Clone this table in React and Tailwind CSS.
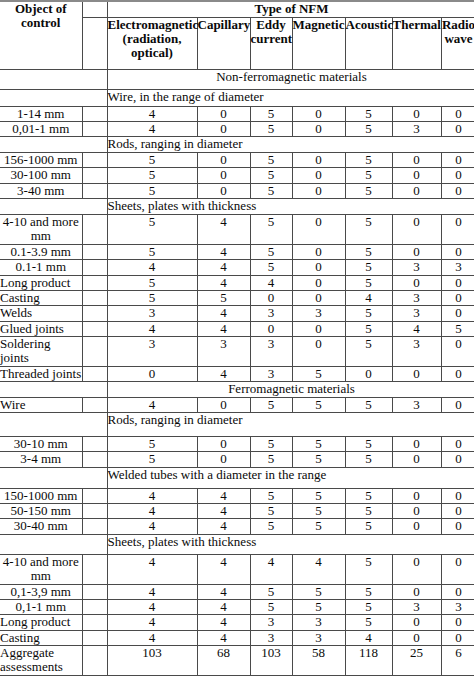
import React from "react";

const cell = "border border-[#4a4a4a] p-0 align-top leading-[14.33px]";

function DataRow({ label, left, vals, tall }) {
  return (
    <tr className={tall ? "h-[30px]" : "h-[15.33px]"}>
      <td className={`${cell} border-l-0 ${left ? "text-left" : "text-center"}`}>{label}</td>
      <td className={cell}></td>
      {vals.map((v, i) => (
        <td key={i} className={`${cell} text-center`}>
          {v}
        </td>
      ))}
    </tr>
  );
}

function SectionRow({ text, center, h }) {
  return (
    <tr className={h}>
      <td colSpan={2} className={`${cell} border-l-0`}></td>
      <td colSpan={7} className={`${cell} ${center ? "text-center" : "text-left"}`}>
        {text}
      </td>
    </tr>
  );
}

export default function App() {
  const widths = [82, 25, 90, 53, 42, 53, 47, 49, 35];
  return (
    <div className="w-[474px] h-[676px] overflow-hidden bg-white border-t-2 border-[#8a8a8a] font-['Liberation_Serif','Times_New_Roman',serif] text-[13px] text-[#0a0a0a]">
      <table className="table-fixed border-collapse w-[476px]">
        <colgroup>
          {widths.map((w, i) => (
            <col key={i} style={{ width: w }} />
          ))}
        </colgroup>
        <tbody>
          <tr className="h-[15px]">
            <td rowSpan={2} className={`${cell} border-l-0 border-t-0 font-bold text-center`}>
              Object of
              <br />
              control
            </td>
            <td className={`${cell} border-t-0`}></td>
            <td colSpan={7} className={`${cell} border-t-0 font-bold text-center`}>
              Type of NFM
            </td>
          </tr>
          <tr className="h-[52px]">
            <td className={cell}></td>
            <td className={`${cell} font-bold text-center whitespace-nowrap`}>
              Electromagnetic
              <br />
              (radiation,
              <br />
              optical)
            </td>
            <td className={`${cell} font-bold text-center`}>Capillary</td>
            <td className={`${cell} font-bold text-center`}>
              Eddy
              <br />
              current
            </td>
            <td className={`${cell} font-bold text-center`}>Magnetic</td>
            <td className={`${cell} font-bold text-center`}>Acoustic</td>
            <td className={`${cell} font-bold text-center`}>Thermal</td>
            <td className={`${cell} font-bold text-center`}>
              Radio
              <br />
              wave
            </td>
          </tr>
          <SectionRow text="Non-ferromagnetic materials" center h="h-[20px]" />
          <SectionRow text="Wire, in the range of diameter" h="h-[17px]" />
          <DataRow label="1-14 mm" vals={[4, 0, 5, 0, 5, 0, 0]} />
          <DataRow label="0,01-1 mm" vals={[4, 0, 5, 0, 5, 3, 0]} />
          <SectionRow text="Rods, ranging in diameter" h="h-[16px]" />
          <DataRow label="156-1000 mm" vals={[5, 0, 5, 0, 5, 0, 0]} />
          <DataRow label="30-100 mm" vals={[5, 0, 5, 0, 5, 0, 0]} />
          <DataRow label="3-40 mm" vals={[5, 0, 5, 0, 5, 0, 0]} />
          <SectionRow text="Sheets, plates with thickness" h="h-[16px]" />
          <DataRow label={<>4-10 and more<br />mm</>} tall vals={[5, 4, 5, 0, 5, 0, 0]} />
          <DataRow label="0.1-3.9 mm" vals={[5, 4, 5, 0, 5, 0, 0]} />
          <DataRow label="0.1-1 mm" vals={[4, 4, 5, 0, 5, 3, 3]} />
          <DataRow label="Long product" left vals={[5, 4, 4, 0, 5, 0, 0]} />
          <DataRow label="Casting" left vals={[5, 5, 0, 0, 4, 3, 0]} />
          <DataRow label="Welds" left vals={[3, 4, 3, 3, 5, 3, 0]} />
          <DataRow label="Glued joints" left vals={[4, 4, 0, 0, 5, 4, 5]} />
          <DataRow label={<>Soldering<br />joints</>} left tall vals={[3, 3, 3, 0, 5, 3, 0]} />
          <DataRow label={<span className="whitespace-nowrap">Threaded joints</span>} left vals={[0, 4, 3, 5, 0, 0, 0]} />
          <SectionRow text="Ferromagnetic materials" center h="h-[14.5px]" />
          <DataRow label="Wire" left vals={[4, 0, 5, 5, 5, 3, 0]} />
          <SectionRow text="Rods, ranging in diameter" h="h-[24px]" />
          <DataRow label="30-10 mm" vals={[5, 0, 5, 5, 5, 0, 0]} />
          <DataRow label="3-4 mm" vals={[5, 0, 5, 5, 5, 0, 0]} />
          <SectionRow text="Welded tubes with a diameter in the range" h="h-[21px]" />
          <DataRow label="150-1000 mm" vals={[4, 4, 5, 5, 5, 0, 0]} />
          <DataRow label="50-150 mm" vals={[4, 4, 5, 5, 5, 0, 0]} />
          <DataRow label="30-40 mm" vals={[4, 4, 5, 5, 5, 0, 0]} />
          <SectionRow text="Sheets, plates with thickness" h="h-[20px]" />
          <DataRow label={<>4-10 and more<br />mm</>} tall vals={[4, 4, 4, 4, 5, 0, 0]} />
          <DataRow label="0,1-3,9 mm" vals={[4, 4, 5, 5, 5, 0, 0]} />
          <DataRow label="0,1-1 mm" vals={[4, 4, 5, 5, 5, 3, 3]} />
          <DataRow label="Long product" left vals={[4, 4, 3, 3, 5, 0, 0]} />
          <DataRow label="Casting" left vals={[4, 4, 3, 3, 4, 0, 0]} />
          <DataRow label={<>Aggregate<br />assessments</>} left tall vals={[103, 68, 103, 58, 118, 25, 6]} />
        </tbody>
      </table>
    </div>
  );
}
